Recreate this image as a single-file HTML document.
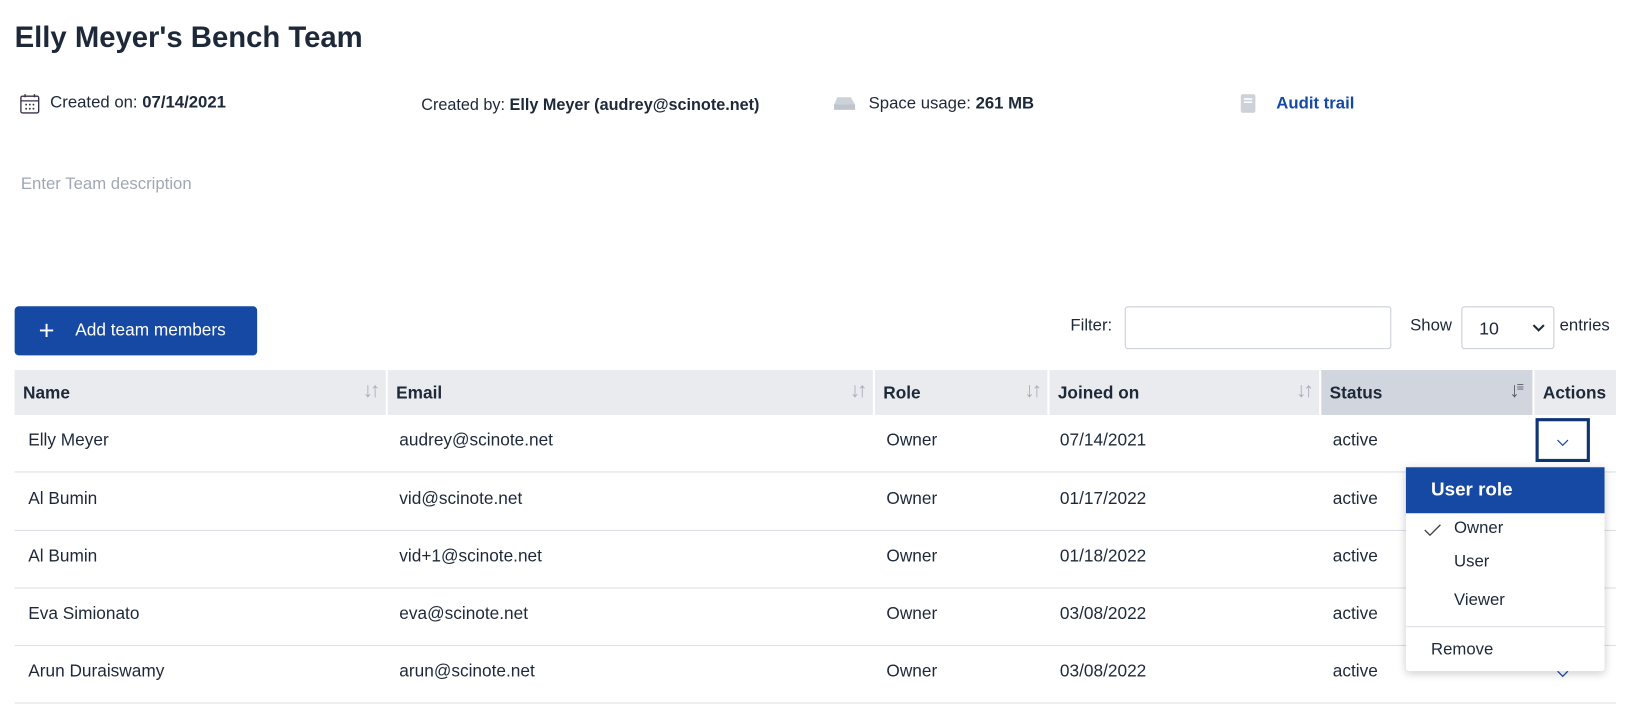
<!DOCTYPE html>
<html><head><style>
*{margin:0;padding:0;box-sizing:border-box}
body{width:1637px;height:705px;background:#fff;font-family:"Liberation Sans",sans-serif;color:#1d2939;overflow:hidden;font-size:16px}
#w{position:absolute;left:0;top:0;width:1566px;height:675px;transform:scale(1.0453);transform-origin:0 0}
.a{position:absolute;white-space:nowrap}
h1{position:absolute;left:14px;top:20px;font-size:28px;font-weight:bold;color:#1d2939}
b{font-weight:bold}
.th{position:absolute;top:354px;height:43px;background:#e9ebef;font-weight:bold;padding:13px 8px;font-size:16.5px}
.sort{position:absolute;right:8px;top:9px;color:#a9b0bd;font-size:20px;font-weight:normal;letter-spacing:-3px}
.row{position:absolute;left:14px;width:1532px;border-bottom:1px solid #dcdfe4;height:55px}
.c{position:absolute;top:15px;font-size:16.5px}
</style></head><body><div id="w">
<h1>Elly Meyer's Bench Team</h1>
<svg class="a" style="left:19px;top:89px" width="20" height="21" viewBox="0 0 20 21"><rect x="1" y="3" width="17" height="16" rx="1.5" fill="none" stroke="#3a2f4a" stroke-width="1.3"/><line x1="1" y1="7.5" x2="18" y2="7.5" stroke="#3a2f4a" stroke-width="1.3"/><line x1="5" y1="1" x2="5" y2="4" stroke="#3a2f4a" stroke-width="1.3"/><line x1="14" y1="1" x2="14" y2="4" stroke="#3a2f4a" stroke-width="1.3"/><g fill="#3a2f4a"><circle cx="6" cy="11" r=".9"/><circle cx="9.5" cy="11" r=".9"/><circle cx="13" cy="11" r=".9"/><circle cx="6" cy="15" r=".9"/><circle cx="9.5" cy="15" r=".9"/><circle cx="13" cy="15" r=".9"/></g></svg>
<div class="a" style="left:48px;top:90px">Created on: <b>07/14/2021</b></div>
<div class="a" style="left:403px;top:92px;font-size:15.5px">Created by: <b>Elly Meyer (audrey@scinote.net)</b></div>
<svg class="a" style="left:797px;top:92px" width="22" height="14"><path d="M4 1h13l4 7v5H1V8z" fill="#cdd2da"/><rect x="1" y="8" width="20" height="5" fill="#bfc5ce"/></svg>
<div class="a" style="left:831px;top:91px">Space usage: <b>261 MB</b></div>
<svg class="a" style="left:1186px;top:90px" width="16" height="18"><rect x="1" y="0" width="14" height="18" rx="2" fill="#cdd2da"/><rect x="4" y="4" width="8" height="1.5" fill="#fff"/><rect x="4" y="7" width="8" height="1.5" fill="#fff"/></svg>
<div class="a" style="left:1221px;top:91px;color:#1549a3;font-weight:bold">Audit trail</div>
<div class="a" style="left:20px;top:168px;color:#a0a7b4">Enter Team description</div>
<div class="a" style="left:14px;top:293px;width:232px;height:47px;background:#1549a3;border-radius:4px;color:#fff;font-size:16.5px;padding:14px 0 0 58px">Add team members</div>
<div class="a" style="left:37px;top:305px;color:#fff;font-size:26px;line-height:22px;font-weight:300">+</div>
<div class="a" style="left:1024px;top:303px">Filter:</div>
<div class="a" style="left:1076px;top:293px;width:255px;height:41px;border:1px solid #c9ced6;border-radius:3px"></div>
<div class="a" style="left:1349px;top:303px">Show</div>
<div class="a" style="left:1398px;top:293px;width:89px;height:41px;border:1px solid #c9ced6;border-radius:3px;padding:11px 0 0 16px;font-size:17px">10</div>
<svg class="a" style="left:1466px;top:309px" width="12" height="10"><path d="M1 2l5 5 5-5" stroke="#1d2939" stroke-width="2" fill="none"/></svg>
<div class="a" style="left:1492px;top:303px">entries</div>
<div class="th" style="left:14px;width:355px">Name<span class="sort">↓↑</span></div>
<div class="th" style="left:371px;width:464px">Email<span class="sort">↓↑</span></div>
<div class="th" style="left:837px;width:165px">Role<span class="sort">↓↑</span></div>
<div class="th" style="left:1004px;width:258px">Joined on<span class="sort">↓↑</span></div>
<div class="th" style="left:1264px;width:202px;background:#d1d5dd">Status<span class="sort" style="color:#555c66">↓<span style="font-size:12px;position:relative;top:-6px;letter-spacing:0">≡</span></span></div>
<div class="th" style="left:1468px;width:78px">Actions</div>
<div class="row" style="top:397px"><span class="c" style="left:13px">Elly Meyer</span><span class="c" style="left:368px">audrey@scinote.net</span><span class="c" style="left:834px">Owner</span><span class="c" style="left:1000px">07/14/2021</span><span class="c" style="left:1261px">active</span></div>
<div class="row" style="top:453px"><span class="c" style="left:13px">Al Bumin</span><span class="c" style="left:368px">vid@scinote.net</span><span class="c" style="left:834px">Owner</span><span class="c" style="left:1000px">01/17/2022</span><span class="c" style="left:1261px">active</span></div>
<div class="row" style="top:508px"><span class="c" style="left:13px">Al Bumin</span><span class="c" style="left:368px">vid+1@scinote.net</span><span class="c" style="left:834px">Owner</span><span class="c" style="left:1000px">01/18/2022</span><span class="c" style="left:1261px">active</span></div>
<div class="row" style="top:563px"><span class="c" style="left:13px">Eva Simionato</span><span class="c" style="left:368px">eva@scinote.net</span><span class="c" style="left:834px">Owner</span><span class="c" style="left:1000px">03/08/2022</span><span class="c" style="left:1261px">active</span></div>
<div class="row" style="top:618px"><span class="c" style="left:13px">Arun Duraiswamy</span><span class="c" style="left:368px">arun@scinote.net</span><span class="c" style="left:834px">Owner</span><span class="c" style="left:1000px">03/08/2022</span><span class="c" style="left:1261px">active</span></div>
<div class="a" style="left:1469px;top:400px;width:52px;height:42px;border:3px solid #0f3474;background:#fff"></div>
<svg class="a" style="left:1489px;top:420px" width="12" height="8"><path d="M1 1l5 5 5-5" stroke="#1549a3" stroke-width="1.2" fill="none"/></svg>
<svg class="a" style="left:1489px;top:641px" width="12" height="8"><path d="M1 1l5 5 5-5" stroke="#1549a3" stroke-width="1.2" fill="none"/></svg>
<div class="a" style="left:1345px;top:447px;width:190px;height:195px;background:#fff;box-shadow:0 2px 8px rgba(0,0,0,.2);border-radius:0 0 3px 3px">
<div style="height:44px;background:#1549a3;color:#fff;font-weight:bold;font-size:18px;padding:11px 0 0 24px">User role</div>
<svg class="a" style="left:17px;top:53px" width="18" height="14"><path d="M1 7l5 5 10-10" stroke="#444" stroke-width="1.3" fill="none"/></svg>
<div class="a" style="left:46px;top:50px">Owner</div>
<div class="a" style="left:46px;top:82px">User</div>
<div class="a" style="left:46px;top:119px">Viewer</div>
<div class="a" style="left:0;top:152px;width:190px;border-top:1px solid #dcdfe4"></div>
<div class="a" style="left:24px;top:166px">Remove</div>
</div>
</div></body></html>
